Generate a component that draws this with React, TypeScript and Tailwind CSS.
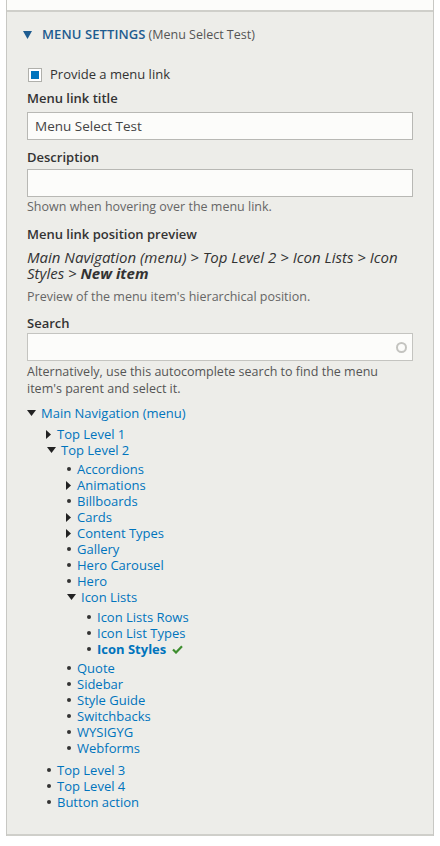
import React from 'react';

type Node = {
  label: string;
  state?: 'open' | 'closed' | 'leaf';
  active?: boolean;
  children?: Node[];
};

const tree: Node = {
  label: 'Main Navigation (menu)',
  state: 'open',
  children: [
    { label: 'Top Level 1', state: 'closed' },
    {
      label: 'Top Level 2',
      state: 'open',
      children: [
        { label: 'Accordions' },
        { label: 'Animations', state: 'closed' },
        { label: 'Billboards' },
        { label: 'Cards', state: 'closed' },
        { label: 'Content Types', state: 'closed' },
        { label: 'Gallery' },
        { label: 'Hero Carousel' },
        { label: 'Hero' },
        {
          label: 'Icon Lists',
          state: 'open',
          children: [
            { label: 'Icon Lists Rows' },
            { label: 'Icon List Types' },
            { label: 'Icon Styles', active: true },
          ],
        },
        { label: 'Quote' },
        { label: 'Sidebar' },
        { label: 'Style Guide' },
        { label: 'Switchbacks' },
        { label: 'WYSIGYG' },
        { label: 'Webforms' },
      ],
    },
    { label: 'Top Level 3' },
    { label: 'Top Level 4' },
    { label: 'Button action' },
  ],
};

const Marker = ({ state }: { state: Node['state'] }) => {
  if (state === 'open') {
    return (
      <span className="w-[15px] shrink-0 flex items-center">
        <svg width="9" height="6" viewBox="0 0 9 6" className="ml-[1px]">
          <path d="M0 0h9L4.5 6z" fill="#222" />
        </svg>
      </span>
    );
  }
  if (state === 'closed') {
    return (
      <span className="w-[11px] shrink-0 flex items-center">
        <svg width="5" height="9" viewBox="0 0 5 9">
          <path d="M0 0v9l5-4.5z" fill="#222" />
        </svg>
      </span>
    );
  }
  return (
    <span className="w-[11px] shrink-0 flex items-center">
      <span className="ml-[1px] w-[4px] h-[4px] rounded-full bg-[#333]" />
    </span>
  );
};

// spacing around each nested list, by depth
const listPad = ['pl-5 pt-[5px] pb-[7px]', 'pl-5 pt-[3px] pb-[6px]', 'pl-5 pt-[4px] pb-[3px]'];

const TreeItem = ({ node, depth }: { node: Node; depth: number }) => (
  <li>
    <div className="flex items-center h-4 leading-4">
      <Marker state={node.state ?? 'leaf'} />
      <span className={node.active ? 'font-bold text-[#0074bd]' : 'text-[#0074bd]'}>
        {node.label}
      </span>
      {node.active && (
        <svg width="11" height="9" viewBox="0 0 11 9" className="ml-[6px]">
          <path d="M1 4.5l3 3L10 1.2" stroke="#3e8e2e" strokeWidth="2.2" fill="none" />
        </svg>
      )}
    </div>
    {node.children && (
      <ul className={listPad[depth]}>
        {node.children.map((c) => (
          <TreeItem key={c.label} node={c} depth={depth + 1} />
        ))}
      </ul>
    )}
  </li>
);

export default function App() {
  return (
    <div
      className="min-h-[846px] bg-white text-[#333] text-[13px]"
      style={{ fontFamily: '"Open Sans", "Noto Sans", sans-serif' }}
    >
      <div className="mx-[6px] border-x border-[#c8c8c4]">
        <div className="h-3 bg-[#fcfcfa] border-b-2 border-[#cfcfca]" />
        <div className="bg-[#edede9] px-5 pt-[14px] pb-[17px] border-b-2 border-[#cfcfca]">
          <div className="flex items-center h-[18px] -ml-[4px]">
            <svg width="9" height="8" viewBox="0 0 9 8" className="mr-[10px]">
              <path d="M0 0h9L4.5 8z" fill="#1e5c90" />
            </svg>
            <span className="font-semibold uppercase text-[#1e5c90] tracking-[0.1px]">Menu settings</span>
            <span className="ml-[3px] text-[12.5px] text-[#555]">(Menu Select Test)</span>
          </div>

          <label className="mt-[22px] flex items-center h-[18px]">
            <span className="w-[14px] h-[14px] ml-[1px] border border-[#b0b0ab] bg-white flex items-center justify-center mr-[8px]">
              <span className="w-[8px] h-[8px] bg-[#0074bd]" />
            </span>
            Provide a menu link
          </label>

          <div className="mt-[5px] font-semibold h-[18px] leading-[18px]">Menu link title</div>
          <div className="mt-[5px] h-[28px] border border-[#b8b8b4] bg-[#fcfcfa] flex items-center px-[7px] text-[13.5px] text-[#444]">
            Menu Select Test
          </div>

          <div className="mt-[8px] font-semibold h-[18px] leading-[18px]">Description</div>
          <div className="mt-[3px] h-[28px] border border-[#b8b8b4] bg-[#fcfcfa]" />
          <div className="mt-[2px] text-[12.5px] text-[#666] leading-[16px]">Shown when hovering over the menu link.</div>

          <div className="mt-[10px] font-semibold h-[18px] leading-[18px]">Menu link position preview</div>
          <div className="mt-[6px] italic text-[15px] leading-[16px] text-[#333]">
            Main Navigation (menu) &gt; Top Level 2 &gt; Icon Lists &gt; Icon Styles &gt;{' '}
            <span className="font-bold">New item</span>
          </div>
          <div className="mt-[8px] text-[12.5px] text-[#666] leading-[16px]">
            Preview of the menu item's hierarchical position.
          </div>

          <div className="mt-[9px] font-semibold h-[18px] leading-[18px]">Search</div>
          <div className="mt-[1px] h-[28px] border border-[#c4c4c0] bg-[#fcfcfa] flex items-center justify-end pr-[5px]">
            <span className="w-[11px] h-[11px] rounded-full border-[2px] border-[#c4c4c0]" />
          </div>
          <div className="mt-[2px] text-[12.5px] text-[#555] leading-[17px]">
            Alternatively, use this autocomplete search to find the menu item's parent and select it.
          </div>

          <ul className="mt-[8px] -ml-[1px]">
            <TreeItem node={tree} depth={0} />
          </ul>
        </div>
      </div>
    </div>
  );
}
